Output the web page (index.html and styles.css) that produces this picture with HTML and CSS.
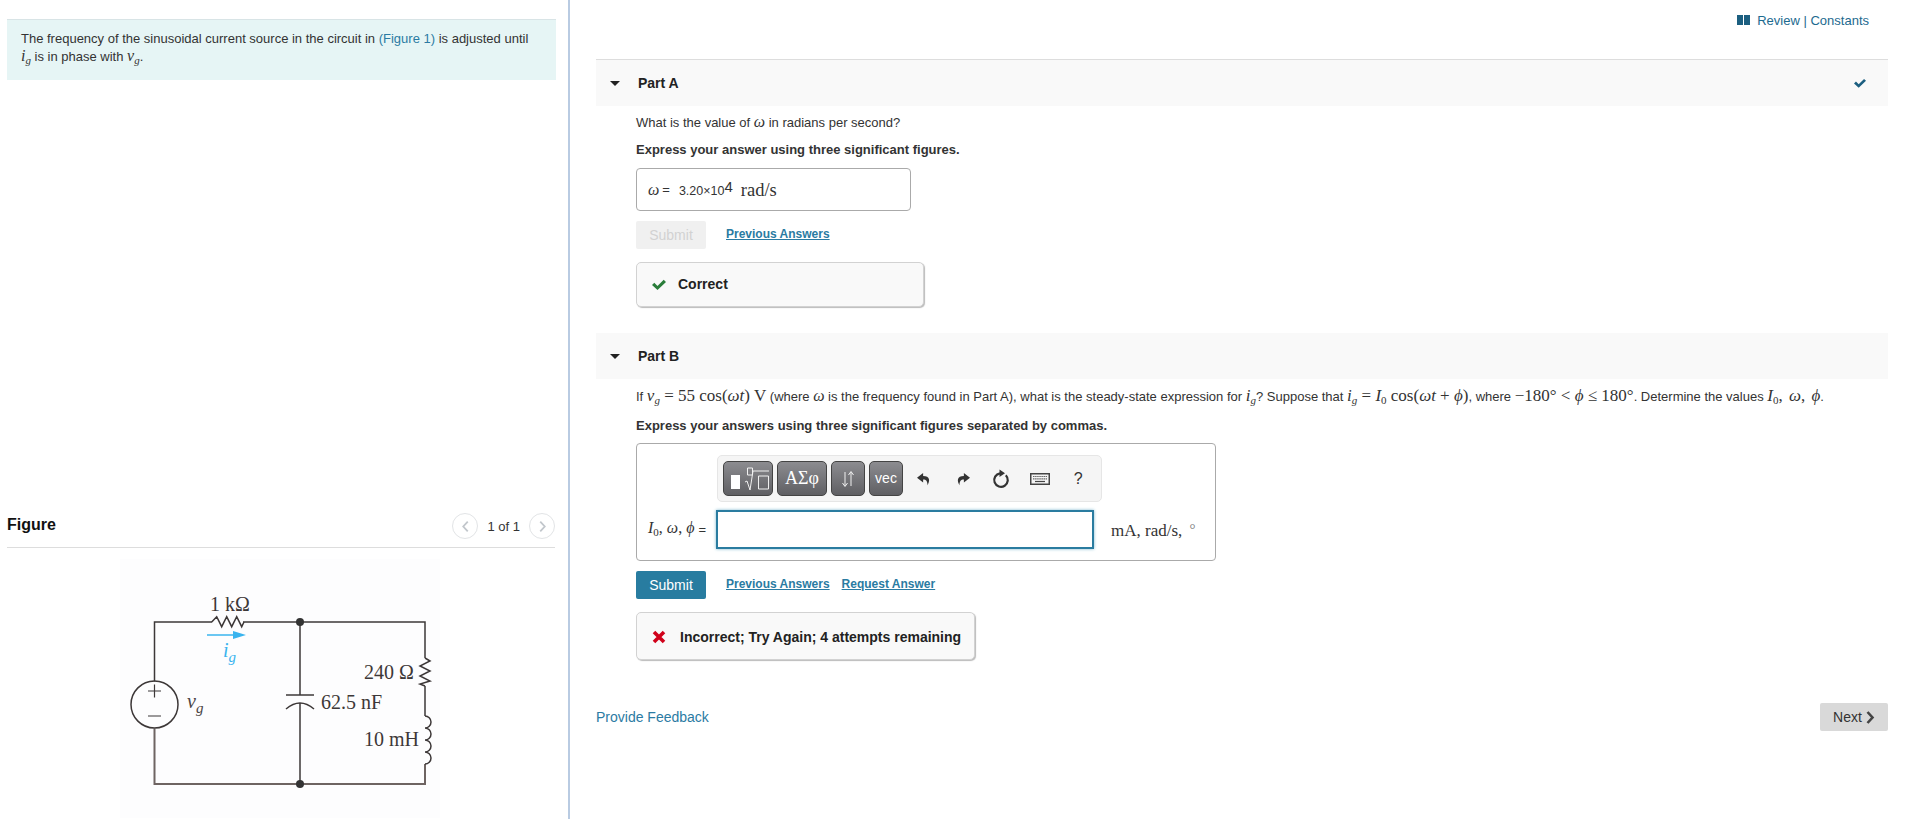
FILE: index.html
```html
<!DOCTYPE html>
<html lang="en">
<head>
<meta charset="utf-8">
<title>Circuit problem</title>
<link rel="stylesheet" href="styles.css">
</head>
<body>
<div class="page">
  <aside class="left">
    <div class="info">The frequency of the sinusoidal current source in the circuit in <a class="plain-link" href="#">(Figure 1)</a> is adjusted until <span class="m"><i>i<sub>g</sub></i></span> is in phase with <span class="m"><i>v<sub>g</sub></i></span>.</div>
    <div class="fig-head">
      <h2 class="fig-title">Figure</h2>
      <div class="pager">
        <span class="pager-btn"><svg viewBox="0 0 10 14" width="9" height="13"><path d="M7.5 1.5 2.5 7l5 5.5" fill="none" stroke="#c2c7cc" stroke-width="2"/></svg></span>
        <span class="pager-text">1 of 1</span>
        <span class="pager-btn"><svg viewBox="0 0 10 14" width="9" height="13"><path d="M2.5 1.5 7.5 7l-5 5.5" fill="none" stroke="#c2c7cc" stroke-width="2"/></svg></span>
      </div>
    </div>
    <svg class="circuit" viewBox="0 0 320 259" width="320" height="259">
      <path class="w-dark" d="M92 63H34.500V122.500M123 63H305V99M305 127V157M305 205V225M180 63V136M180 144V225"/>
      <path class="w-thick" d="M34.500 169.500V225H305V205"/>
      <path class="w-dark" d="M91.700 63 96.700 57.700 101.700 67.700 106.700 57.700 111.700 67.700 116.700 57.700 121.700 67.700 124 63"/>
      <path class="w-dark" d="M305 99 310 102 300 107 310 112 300 117 310 122 300 125 305 127"/>
      <path class="w-dark" d="M305 157a6 6 0 0 1 0 12a6 6 0 0 1 0 12a6 6 0 0 1 0 12a6 6 0 0 1 0 12"/>
      <path class="w-dark" d="M166 136H194"/>
      <path class="w-dark" d="M166 150Q180 138 194 150"/>
      <circle class="w-dark" cx="34.500" cy="145.500" r="23.500"/>
      <path class="w-thin" d="M28 132H41M34.500 125.500V138.500M28 157H41"/>
      <circle class="dot" cx="180" cy="63" r="4"/>
      <circle class="dot" cx="180" cy="225" r="4"/>
      <path class="w-blue" d="M87 76H116"/>
      <path class="blue-fill" d="M113 72 126 76 113 80z"/>
      <text class="c-label" x="90" y="52">1 kΩ</text>
      <text class="c-label" x="244" y="120">240 Ω</text>
      <text class="c-label" x="201" y="150">62.5 nF</text>
      <text class="c-label" x="244" y="187">10 mH</text>
      <text class="c-var" x="67" y="149">v<tspan class="c-sub" dy="5">g</tspan></text>
      <text class="c-var c-blue" x="103" y="98">i<tspan class="c-sub" dy="5">g</tspan></text>
    </svg>
  </aside>

  <main class="right">
    <div class="top-links">
      <svg class="book" viewBox="0 0 13 10" width="13" height="10"><path d="M0 0H6V10H0zM7 0H13V10H7z"/></svg>
      <span>Review | Constants</span>
    </div>

    <section class="parts">
      <header class="part-head">
        <span class="tri"></span>
        <span class="part-name">Part A</span>
        <svg class="head-check" viewBox="0 0 14 11" width="12" height="10"><path d="M0 6 2.300 3.700 5.500 6.900 11.700 .7 14 3 5.500 11z"/></svg>
      </header>
      <div class="part-body">
        <p class="q q-a">What is the value of <span class="m m-sm"><i>ω</i></span> in radians per second?</p>
        <p class="q q-bold">Express your answer using three significant figures.</p>
        <div class="answer-a">
          <span class="m m-sm"><i>ω</i></span><span class="eq">=</span>
          <span class="ans-val">3.20×10<sup>4</sup></span>
          <span class="m unit">rad/s</span>
        </div>
        <div class="actions">
          <button class="submit submit-off">Submit</button>
          <a class="act-link" href="#">Previous Answers</a>
        </div>
        <div class="feedback fb-ok">
          <svg class="fb-icon" viewBox="0 0 14 11" width="14" height="11"><path d="M0 6 2.300 3.700 5.500 6.900 11.700 .7 14 3 5.500 11z"/></svg>
          <strong>Correct</strong>
        </div>
      </div>

      <header class="part-head part-head-b">
        <span class="tri"></span>
        <span class="part-name">Part B</span>
      </header>
      <div class="part-body">
        <p class="q q-b">If <span class="m"><i>v<sub>g</sub></i> = 55 cos(<i>ωt</i>) V</span> (where <span class="m m-sm"><i>ω</i></span> is the frequency found in Part A), what is the steady-state expression for <span class="m"><i>i<sub>g</sub></i></span>? Suppose that <span class="m"><i>i<sub>g</sub></i> = <i>I</i><sub>0</sub> cos(<i>ωt</i> + <i>ϕ</i>)</span>, where <span class="m">−180° &lt; <i>ϕ</i> ≤ 180°</span>. Determine the values <span class="m m-list"><i>I</i><sub>0</sub>, <i>ω</i>, <i>ϕ</i></span>.</p>
        <p class="q q-bold q-bold-b">Express your answers using three significant figures separated by commas.</p>
        <div class="answer-b">
          <div class="toolbar">
            <span class="tool tool-w1">
              <svg viewBox="0 0 46 30" width="46" height="30">
                <rect class="i-solid" x="6" y="11" width="9" height="14"/>
                <path class="i-line" d="M20 18l2-1 3 9 3-19H44M22.500 4h5v7h-5zM33.500 12h10v13h-10z"/>
              </svg>
            </span>
            <span class="tool tool-w1 tool-greek">ΑΣφ</span>
            <span class="tool tool-w2">
              <svg viewBox="0 0 16 20" width="16" height="20"><path class="i-line" d="M5 3V17M2.500 14 5 17.500 7.500 14M11 17V3M8.500 6 11 2.500 13.500 6"/></svg>
            </span>
            <span class="tool tool-w2 tool-vec">vec</span>
            <span class="plain-tool">
              <svg viewBox="0 0 16 16" width="14" height="16"><path class="i-dark" d="M7 1 0 6.500 7 12V8.500C10.500 8.500 12 10.500 12 15 15 10 15 4.500 7 4.500z"/></svg>
            </span>
            <span class="plain-tool">
              <svg viewBox="0 0 16 16" width="14" height="16"><path class="i-dark" d="M9 1 16 6.500 9 12V8.500C5.500 8.500 4 10.500 4 15 1 10 1 4.500 9 4.500z"/></svg>
            </span>
            <span class="plain-tool">
              <svg viewBox="0 0 18 20" width="18" height="20"><path class="i-stroke" d="M13.800 6.200A6.800 6.800 0 1 1 8 4.300"/><path class="i-dark" d="M7.500 .5 13 4.300 7.500 8z"/></svg>
            </span>
            <span class="plain-tool">
              <svg viewBox="0 0 20 12" width="20" height="12"><rect x=".75" y=".75" width="18.500" height="10.500" fill="#f4f4f4" stroke="#444" stroke-width="1.500"/><path d="M3 3.500H17M3 5.800H17" stroke="#666" stroke-width="1.200" stroke-dasharray="1.500 .6"/><path d="M5 8.500H15" stroke="#444" stroke-width="1.200"/></svg>
            </span>
            <span class="plain-tool tool-help">?</span>
          </div>
          <div class="input-row">
            <span class="ans-label"><span class="m m-sm"><i>I</i><sub>0</sub>, <i>ω</i>, <i>ϕ</i></span><span class="eq">=</span></span>
            <input class="math-input" type="text" aria-label="answer">
            <span class="m unit-b">mA, rad/s, <sup class="deg">°</sup></span>
          </div>
        </div>
        <div class="actions actions-b">
          <button class="submit">Submit</button>
          <a class="act-link" href="#">Previous Answers</a>
          <a class="act-link link-req" href="#">Request Answer</a>
        </div>
        <div class="feedback fb-bad">
          <svg class="fb-icon" viewBox="0 0 14 14" width="14" height="14"><path d="M2 2 12 12M12 2 2 12" stroke="#d0021b" stroke-width="3.600"/></svg>
          <strong class="bad-text">Incorrect; Try Again; 4 attempts remaining</strong>
        </div>
      </div>
    </section>

    <footer class="bottom">
      <a class="plain-link" href="#">Provide Feedback</a>
      <button class="next">Next <svg viewBox="0 0 9 13" width="9" height="13"><path d="M1.500 1 6.500 6.500 1.500 12" fill="none" stroke="#444" stroke-width="2.600"/></svg></button>
    </footer>
  </main>
</div>
</body>
</html>
```

FILE: styles.css
```css
* { box-sizing: border-box; }
html, body { margin: 0; height: 100%; overflow: hidden; background: #fff; }
body { font-family: "Liberation Sans", Arial, sans-serif; font-size: 13px; color: #333; }
a { text-decoration: none; }
.page { display: flex; height: 819px; }

.left { width: 570px; flex: none; border-right: 2px solid #b9cbe2; padding-top: 19px; }
.info { margin: 0 12px 0 7px; height: 61px; padding: 10px 20px 0 14px; line-height: 18px; background: #e6f5f5; border-top: 1px solid #d8e4e6; }
.plain-link { color: #2b7ba3; }
.m { font-family: "Liberation Serif", "DejaVu Serif", serif; font-size: 17px; line-height: 0; white-space: nowrap; }
.m-sm { font-size: 16px; }
.info .m { font-size: 16px; }
.m-list { word-spacing: 2px; }
.m sub { font-size: 11px; line-height: 0; vertical-align: -3px; }
.fig-head { display: flex; justify-content: space-between; align-items: center; height: 48px; margin: 420px 13px 0 7px; padding-top: 5px; border-bottom: 1px solid #ddd; }
.fig-title { margin: -3px 0 0; font-size: 16px; font-weight: 700; color: #111; }
.pager { display: flex; align-items: center; gap: 9px; }
.pager-btn { display: flex; align-items: center; justify-content: center; width: 26px; height: 26px; border: 1px solid #e2e4e6; border-radius: 50%; }
.pager-text { font-size: 13px; color: #333; }
.circuit { display: block; margin: 11px 0 0 120px; background: #fdfdfe; }
.w-dark, .w-thick, .w-thin, .w-blue { fill: none; }
.w-dark { stroke: #3d3838; stroke-width: 1.500; }
.w-thick { stroke: #6e6462; stroke-width: 2; }
.w-thin { stroke: #3d3838; stroke-width: 1.200; }
.w-blue { stroke: #3ab4ee; stroke-width: 1.500; }
.blue-fill { fill: #3ab4ee; }
.dot { fill: #333; }
.c-label { font-family: "Liberation Serif", serif; font-size: 20px; fill: #3d3838; }
.c-var { font-family: "Liberation Serif", serif; font-style: italic; font-size: 20px; fill: #4a4444; }
.c-sub { font-size: 15px; }
.c-blue { fill: #3ab4ee; }

.right { flex: 1; min-width: 0; padding: 0 20px 0 26px; }
.top-links { display: flex; justify-content: flex-end; align-items: center; gap: 7px; height: 40px; padding-right: 19px; color: #1d6a8f; font-size: 13px; }
.book { fill: #1c5f80; }
.parts { margin-top: 19px; border-top: 1px solid #ddd; }
.part-head { display: flex; align-items: center; height: 46px; padding-left: 14px; background: #f9f9f9; font-size: 14px; }
.part-head-b { margin-top: 26px; }
.tri { width: 0; height: 0; border-style: solid; border-width: 5px 5.500px 0; border-color: #222 transparent transparent; }
.part-name { margin-left: 18px; font-weight: 700; color: #222; }
.head-check { margin-left: auto; margin-right: 22px; fill: #1c5f80; }
.part-body { padding-left: 40px; }
.q { margin: 0; line-height: 18px; }
.q-a { padding-top: 8px; }
.q-b { padding-top: 9px; }
.q-bold { margin-top: 9px; font-weight: 700; }
.q-bold-b { margin-top: 11px; }
.answer-a { display: flex; align-items: center; width: 275px; height: 43px; margin-top: 9px; padding-left: 11px; border: 1px solid #aaa; border-radius: 4px; }
.answer-b { width: 580px; height: 118px; margin-top: 8px; padding-top: 11px; border: 1px solid #aaa; border-radius: 4px; }
.eq { margin: 0 9px 0 3px; font-size: 13px; }
.ans-val { font-size: 12.500px; padding-top: 2px; }
.ans-val sup { font-size: 15px; line-height: 0; vertical-align: 3px; }
.unit { margin-left: 8px; font-size: 18.500px; }
.actions { display: flex; align-items: center; margin-top: 10px; }
.submit { width: 70px; height: 28px; padding: 0; border: 0; border-radius: 2px; background: #287ca0; color: #fff; font: 14px "Liberation Sans", Arial, sans-serif; }
.submit-off { background: #f0f0f0; color: #d2d2d2; }
.act-link { margin-left: 20px; margin-top: -2px; color: #2a7ba2; font-size: 12px; font-weight: 700; text-decoration: underline; }
.link-req { margin-left: 12px; }
.feedback { display: flex; align-items: center; margin-top: 13px; border: 1px solid #d2d2d2; border-radius: 5px; background: #f9f9f9; box-shadow: 1px 1px 1px #bbb; color: #222; font-size: 14px; }
.fb-ok { width: 288px; height: 45px; padding: 0 0 1px 15px; }
.fb-ok .fb-icon { fill: #2a7d3a; margin-right: 12px; }
.fb-bad { width: 339px; height: 48px; padding: 1px 0 0 15px; }
.fb-bad .fb-icon { margin-right: 14px; }
.bad-text { white-space: nowrap; }
.toolbar { display: flex; align-items: center; gap: 4px; width: 385px; height: 47px; margin-left: 80px; padding-left: 5px; background: #f5f5f5; border: 1px solid #e6e6e6; border-radius: 5px; }
.tool { display: flex; align-items: center; justify-content: center; height: 35px; border: 1px solid #444; border-radius: 5px; background: linear-gradient(#8c8c90, #5f5f63); color: #fff; }
.tool-w1 { width: 50px; }
.tool-w2 { width: 34px; }
.tool-greek { font-family: "Liberation Serif", serif; font-size: 18px; }
.tool-vec { font-size: 14px; padding-bottom: 2px; }
.i-solid { fill: #fff; }
.i-line { fill: none; stroke: #f0f0f0; stroke-width: 1; }
.i-dark { fill: #333; }
.i-stroke { fill: none; stroke: #333; stroke-width: 2.200; }
.plain-tool { display: flex; justify-content: center; width: 34.500px; color: #333; }
.toolbar .plain-tool:first-of-type { margin-left: 6px; }
.tool-help { font-size: 16px; }
.input-row { display: flex; align-items: center; margin-top: 8px; }
.ans-label { display: flex; align-items: center; justify-content: flex-start; width: 79px; padding-left: 11px; }
.ans-label .eq { margin: 0 0 0 4px; }
.math-input { width: 378px; height: 39px; border: 2px solid #2a7ca0; box-shadow: 0 0 3px #7fb7cf; background: #fff; outline: 0; }
.unit-b { margin-left: 17px; color: #333; }
.deg { font-size: 15px; line-height: 0; margin-left: 3px; color: #777; vertical-align: 2px; }
.actions-b { margin-top: 10px; }
.bottom { display: flex; justify-content: space-between; align-items: center; margin-top: 43px; font-size: 14px; }
.next { display: flex; align-items: center; justify-content: center; gap: 4px; width: 68px; height: 28px; padding: 0; border: 0; border-radius: 2px; background: #d9d9d9; color: #333; font: 14px "Liberation Sans", Arial, sans-serif; }
```
